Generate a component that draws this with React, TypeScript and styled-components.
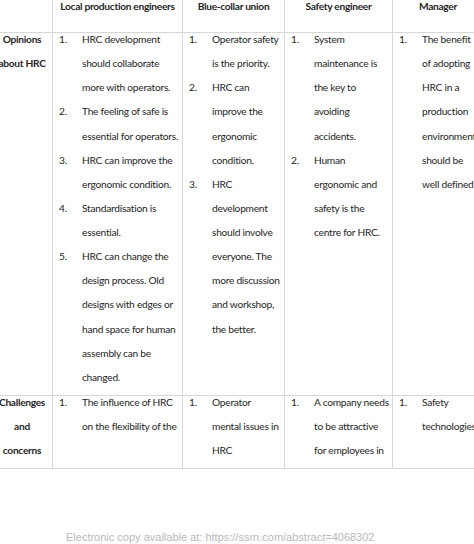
import React from 'react';
import styled, { createGlobalStyle } from 'styled-components';

const GlobalStyle = createGlobalStyle`
  html, body {
    margin: 0;
    padding: 0;
    background: #ffffff;
    overflow: hidden;
  }
  * {
    box-sizing: border-box;
  }
`;

const Page = styled.div`
  width: 474px;
  height: 544px;
  overflow: hidden;
  font-family: Lato, "Open Sans", sans-serif;
  color: #262626;
`;

const Table = styled.div`
  display: grid;
  grid-template-columns: 61px 130px 102px 108px 90px;
  width: 491px;
  margin-left: -8px;
`;

const Cell = styled.div<{ $last?: boolean }>`
  border-right: ${p => (p.$last ? 'none' : '1px solid #d8d8d8')};
  border-bottom: 1px solid #d8d8d8;
  font-size: 10.2px;
  letter-spacing: -0.25px;
`;

const HeadCell = styled(Cell)`
  height: 33px;
  font-weight: 700;
  text-align: center;
  line-height: 12px;
  white-space: nowrap;
  letter-spacing: -0.3px;
`;

const LabelCell = styled(Cell)`
  font-weight: 700;
  text-align: center;
  white-space: nowrap;
  letter-spacing: -0.3px;
`;

const BodyCell = styled(Cell)`
  padding-left: 6px;
`;

const Line = styled.div`
  height: 24.13px;
  line-height: 12px;
  white-space: nowrap;
`;

const Item = styled.div`
  display: grid;
  grid-template-columns: 23px 1fr;
`;

const Num = styled.div`
  height: 24.13px;
  line-height: 12px;
`;

const Footer = styled.div`
  margin-top: 62px;
  padding-left: 66px;
  font-family: "Liberation Sans", Arial, sans-serif;
  font-size: 11px;
  line-height: 12px;
  color: #b9b9b9;
  white-space: nowrap;
`;

type Row = { label: string[]; cells: string[][][] };

const headers = ['', 'Local production engineers', 'Blue-collar union', 'Safety engineer', 'Manager'];

const rows: Row[] = [
  {
    label: ['Opinions', 'about HRC'],
    cells: [
      [
        ['HRC development', 'should collaborate', 'more with operators.'],
        ['The feeling of safe is', 'essential for operators.'],
        ['HRC can improve the', 'ergonomic condition.'],
        ['Standardisation is', 'essential.'],
        ['HRC can change the', 'design process. Old', 'designs with edges or', 'hand space for human', 'assembly can be', 'changed.'],
      ],
      [
        ['Operator safety', 'is the priority.'],
        ['HRC can', 'improve the', 'ergonomic', 'condition.'],
        ['HRC', 'development', 'should involve', 'everyone. The', 'more discussion', 'and workshop,', 'the better.'],
      ],
      [
        ['System', 'maintenance is', 'the key to', 'avoiding', 'accidents.'],
        ['Human', 'ergonomic and', 'safety is the', 'centre for HRC.'],
      ],
      [['The benefit', 'of adopting', 'HRC in a', 'production', 'environment', 'should be', 'well defined.']],
    ],
  },
  {
    label: ['Challenges', 'and', 'concerns'],
    cells: [
      [['The influence of HRC', 'on the flexibility of the']],
      [['Operator', 'mental issues in', 'HRC']],
      [['A company needs', 'to be attractive', 'for employees in']],
      [['Safety', 'technologies']],
    ],
  },
];

const App: React.FC = () => {
  return (
    <Page>
      <GlobalStyle />
      <Table>
        {headers.map((h, i) => (
          <HeadCell key={i} $last={i === headers.length - 1}>
            {h}
          </HeadCell>
        ))}
        {rows.map((row, r) => (
          <React.Fragment key={r}>
            <LabelCell>
              {row.label.map((l, i) => (
                <Line key={i}>{l}</Line>
              ))}
            </LabelCell>
            {row.cells.map((items, c) => (
              <BodyCell key={c} $last={c === row.cells.length - 1}>
                {items.map((lines, n) => (
                  <Item key={n}>
                    <Num>{n + 1}.</Num>
                    <div>
                      {lines.map((l, i) => (
                        <Line key={i}>{l}</Line>
                      ))}
                    </div>
                  </Item>
                ))}
              </BodyCell>
            ))}
          </React.Fragment>
        ))}
      </Table>
      <Footer>Electronic copy available at: https://ssrn.com/abstract=4068302</Footer>
    </Page>
  );
};

export default App;
